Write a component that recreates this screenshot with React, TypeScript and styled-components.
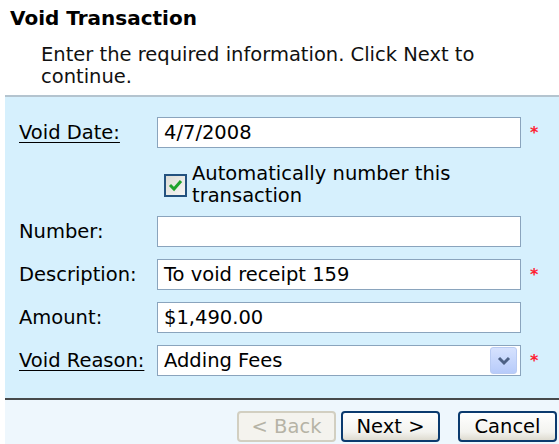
import React, { FC } from 'react';
import styled, { createGlobalStyle } from 'styled-components';

const FONT = '"DejaVu Sans", Verdana, sans-serif';

const GlobalStyle = createGlobalStyle`
  html, body {
    margin: 0;
    padding: 0;
    background: #ffffff;
  }
  body {
    font-family: ${FONT};
    font-size: 19.5px;
    color: #000000;
  }
`;

const Page = styled.div`
  width: 559px;
  height: 444px;
  display: flex;
  flex-direction: column;
  overflow: hidden;
`;

const Title = styled.div`
  font-weight: bold;
  font-size: 20px;
  padding: 7px 0 15px 10px;
  line-height: 22px;
`;

const Intro = styled.div`
  padding: 0 40px 0 41px;
  line-height: 22px;
  height: 51px;
  color: #111111;
`;

const Panel = styled.div`
  margin-left: 5px;
  background: #d6f0fd;
  border-top: 2px solid #b4c4cf;
  border-bottom: 2px solid #46494b;
  padding: 20px 0 22px 14px;
  display: grid;
  grid-template-columns: 138px 364px 38px;
  row-gap: 12px;
  align-items: center;
`;

const Label = styled.label<{ $link?: boolean }>`
  text-decoration: ${(p) => (p.$link ? 'underline' : 'none')};
  text-underline-offset: 3px;
  white-space: nowrap;
`;

const Field = styled.div`
  height: 31px;
  box-sizing: border-box;
  border: 1px solid #8aa4bd;
  background: #ffffff;
  display: flex;
  align-items: center;
  padding: 0 6px;
  position: relative;
`;

const Required = styled.span<{ $show?: boolean }>`
  color: #ff2030;
  font-size: 16px;
  font-weight: bold;
  padding-left: 9px;
  visibility: ${(p) => (p.$show ? 'visible' : 'hidden')};
`;

const CheckRow = styled.div`
  grid-column: 2 / 3;
  display: flex;
  align-items: center;
  padding-left: 7px;
  line-height: 22px;
  margin: 3px 0 -3px;
`;

const CheckBox = styled.span`
  width: 23px;
  height: 23px;
  box-sizing: border-box;
  border: 2px solid #23527f;
  background: linear-gradient(135deg, #dcdcd6, #f6f6f4);
  margin-right: 5px;
  flex: none;
  display: flex;
  align-items: center;
  justify-content: center;
`;

const DropButton = styled.span`
  position: absolute;
  right: 3px;
  top: 1px;
  bottom: 1px;
  width: 27px;
  border-radius: 3px;
  background: linear-gradient(180deg, #d6e2fe, #b7cbfa);
  border: 1px solid #b9cbf3;
  box-sizing: border-box;
  display: flex;
  align-items: center;
  justify-content: center;
`;

const Footer = styled.div`
  flex: 1;
  margin-left: 5px;
  background: #eef7fd;
  display: flex;
  justify-content: flex-end;
  align-items: flex-start;
  padding: 11px 2px 0 0;
  gap: 5px;
`;

const Button = styled.button<{ $gapLeft?: number }>`
  width: 99px;
  height: 31px;
  font-family: ${FONT};
  font-size: 19.5px;
  border-radius: 4px;
  border: 2px solid #0b3a6e;
  background: linear-gradient(180deg, #ffffff 0%, #f3f3ef 70%, #dedbd0 100%);
  color: #000000;
  padding: 0;
  margin-left: ${(p) => p.$gapLeft ?? 0}px;
  &:disabled {
    border-color: #d2cfc1;
    color: #b6b3a6;
    background: #f4f3ee;
  }
`;

type Row = {
  label: string,
  value: string,
  link?: boolean,
  required?: boolean,
  dropdown?: boolean,
};

const Check: FC = () => (
  <svg width="15" height="14" viewBox="0 0 15 14">
    <path d="M2 7 L6 11 L13 3" fill="none" stroke="#1fa32c" strokeWidth="3" />
  </svg>
);

const Chevron: FC = () => (
  <svg width="14" height="10" viewBox="0 0 14 10">
    <path d="M2 2 L7 7 L12 2" fill="none" stroke="#4d6185" strokeWidth="3" />
  </svg>
);

const FormRow: FC<Row> = (props) => (
  <>
    <Label $link={props.link}>{props.label}</Label>
    <Field>
      {props.value}
      {props.dropdown && (
        <DropButton>
          <Chevron />
        </DropButton>
      )}
    </Field>
    <Required $show={props.required}>*</Required>
  </>
);

const App: FC = () => {
  return (
    <Page>
      <GlobalStyle />
      <Title>Void Transaction</Title>
      <Intro>Enter the required information. Click Next to continue.</Intro>
      <Panel>
        <FormRow label="Void Date:" value="4/7/2008" link required />
        <CheckRow>
          <CheckBox>
            <Check />
          </CheckBox>
          <span>Automatically number this transaction</span>
        </CheckRow>
        <span />
        <FormRow label="Number:" value="" />
        <FormRow label="Description:" value="To void receipt 159" required />
        <FormRow label="Amount:" value="$1,490.00" />
        <FormRow label="Void Reason:" value="Adding Fees" link required dropdown />
      </Panel>
      <Footer>
        <Button disabled>&lt; Back</Button>
        <Button>Next &gt;</Button>
        <Button $gapLeft={13}>Cancel</Button>
      </Footer>
    </Page>
  );
};

export default App;
